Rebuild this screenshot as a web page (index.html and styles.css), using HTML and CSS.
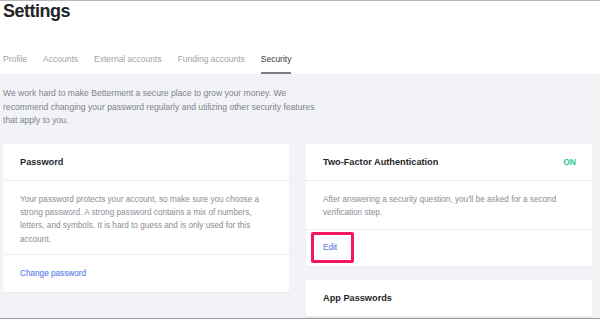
FILE: index.html
```html
<!DOCTYPE html>
<html>
<head>
<meta charset="utf-8">
<link rel="stylesheet" href="styles.css">
</head>
<body>
<div class="page">
  <header class="header">
    <h1 class="title">Settings</h1>
    <nav class="tabs">
      <span class="tab">Profile</span>
      <span class="tab">Accounts</span>
      <span class="tab">External accounts</span>
      <span class="tab">Funding accounts</span>
      <span class="tab tab-active">Security</span>
    </nav>
  </header>
  <main class="main">
    <p class="intro">We work hard to make Betterment a secure place to grow your money. We<br>recommend changing your password regularly and utilizing other security features<br>that apply to you.</p>
    <div class="columns">
      <div class="col">
        <section class="card">
          <div class="card-head"><h2 class="card-title">Password</h2></div>
          <div class="card-body pw-body">Your password protects your account, so make sure you choose a<br>strong password. A strong password contains a mix of numbers,<br>letters, and symbols. It is hard to guess and is only used for this<br>account.</div>
          <div class="card-foot"><a class="link">Change password</a></div>
        </section>
      </div>
      <div class="col">
        <section class="card">
          <div class="card-head"><h2 class="card-title">Two-Factor Authentication</h2><span class="status">ON</span></div>
          <div class="card-body tf-body">After answering a security question, you'll be asked for a second<br>verification step.</div>
          <div class="card-foot edit-foot"><a class="link">Edit</a><span class="highlight"></span></div>
        </section>
        <section class="card">
          <div class="card-head"><h2 class="card-title">App Passwords</h2></div>
        </section>
      </div>
    </div>
  </main>
</div>
</body>
</html>
```

FILE: styles.css
```css
* { box-sizing: border-box; }
html, body { margin: 0; padding: 0; }
body {
  width: 600px;
  height: 319px;
  overflow: hidden;
  font-family: "Liberation Sans", Arial, sans-serif;
  background: #f2f3f7;
}
.page {
  height: 319px;
  border-top: 1px solid #b8b8b8;
  border-bottom: 1px solid #9a9a9a;
  overflow: hidden;
  display: flex;
  flex-direction: column;
}
.header {
  background: #fff;
  padding: 0 3px;
  height: 73px;
  display: flex;
  flex-direction: column;
  justify-content: space-between;
}
.title {
  margin: 0;
  font-size: 18px;
  line-height: 20px;
  font-weight: bold;
  color: #222427;
  letter-spacing: -0.5px;
}
.tabs {
  display: flex;
  gap: 16px;
}
.tab {
  font-size: 8.5px;
  color: #a0a3a9;
  padding-bottom: 8px;
  line-height: 10px;
  border-bottom: 2px solid transparent;
}
.tab-active {
  color: #3a3d42;
  border-bottom-color: #7c7f86;
}
.main {
  flex: 1;
  padding: 13px 8px 0 3px;
}
.intro {
  margin: 0 0 16px;
  font-size: 8.6px;
  line-height: 13.5px;
  color: #7f828a;
  white-space: nowrap;
}
.columns {
  display: flex;
  gap: 17px;
  align-items: flex-start;
}
.col {
  flex: 1;
  display: flex;
  flex-direction: column;
  gap: 14px;
}
.card {
  background: #fff;
  box-shadow: 0 1px 1px rgba(0, 0, 0, 0.04);
}
.card-head {
  height: 37px;
  padding: 0 16px 0 17px;
  display: flex;
  align-items: center;
  justify-content: space-between;
  border-bottom: 1px solid #eceef2;
}
.card-title {
  margin: 0;
  font-size: 9.2px;
  font-weight: bold;
  color: #26282c;
}
.status {
  font-size: 8.5px;
  font-weight: bold;
  color: #1fcc92;
}
.card-body {
  padding: 12px 17px 0;
  font-size: 8.2px;
  line-height: 13.4px;
  color: #8a8d94;
  border-bottom: 1px solid #eceef2;
  white-space: nowrap;
}
.pw-body { height: 74px; }
.tf-body { height: 49px; }
.card-foot {
  height: 37px;
  padding: 0 17px;
  display: flex;
  align-items: center;
  position: relative;
}
.edit-foot { height: 36px; }
.link {
  font-size: 8.2px;
  color: #6486ea;
  -webkit-text-stroke: 0.15px #6486ea;
}
.highlight {
  position: absolute;
  left: 5px;
  top: 2px;
  width: 43px;
  height: 31px;
  border: 3px solid #f21860;
  border-radius: 2px;
}
```
